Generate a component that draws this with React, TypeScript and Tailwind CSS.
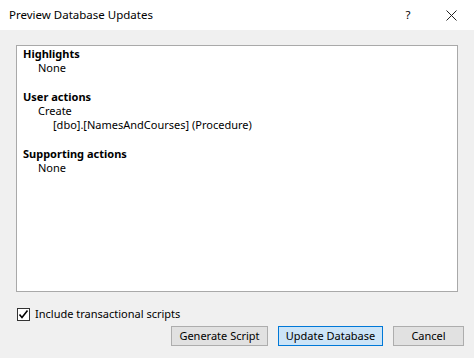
import React from 'react';

const font = { fontFamily: '"Segoe UI", "Noto Sans", "Liberation Sans", sans-serif' };

function Section({ title, children, first }: { title: string; children: React.ReactNode; first?: boolean }) {
    return (
        <div className={first ? '' : 'mt-[15px]'}>
            <div className="font-bold leading-[14px]">{title}</div>
            <div className="pl-[15px]">{children}</div>
        </div>
    );
}

function App() {
    return (
        <div className="w-[474px] h-[358px] flex flex-col bg-[#f0f0f0] text-[11px] text-black overflow-hidden" style={font}>
            {/* title bar */}
            <div className="h-[30px] bg-white flex items-center pl-[9px] shrink-0 text-[11.5px]">
                <span className="flex-1">Preview Database Updates</span>
                <span className="w-[12px] text-center mr-[32px]">?</span>
                <svg width="11" height="11" viewBox="0 0 11 11" className="mr-[17px]">
                    <path d="M0.5 0.5 L10.5 10.5 M10.5 0.5 L0.5 10.5" stroke="#222" strokeWidth="1" />
                </svg>
            </div>

            <div className="flex-1 flex flex-col px-[16px] pt-[15px]">
                <div className="h-[247px] bg-white border border-[#a9a9a9] pl-[6px] pt-[1px] leading-[14px]">
                    <Section title="Highlights" first>
                        <div>None</div>
                    </Section>
                    <Section title="User actions">
                        <div>Create</div>
                        <div className="pl-[15px]">[dbo].[NamesAndCourses] (Procedure)</div>
                    </Section>
                    <Section title="Supporting actions">
                        <div>None</div>
                    </Section>
                </div>

                <label className="flex items-center gap-[5px] mt-[15px] pl-[1px] h-[14px]">
                    <span className="w-[13px] h-[13px] border border-[#333] bg-white flex items-center justify-center">
                        <svg width="11" height="11" viewBox="0 0 11 11">
                            <path d="M1.5 5.5 L4 8.5 L9.5 1.5" stroke="#000" strokeWidth="1.6" fill="none" />
                        </svg>
                    </span>
                    <span>Include transactional scripts</span>
                </label>

                <div className="flex justify-end gap-[10px] mt-[5px] mr-[-6px]">
                    <button className="w-[97px] h-[20px] bg-[#e1e1e1] border border-[#adadad]">Generate Script</button>
                    <button className="w-[105px] h-[20px] bg-[#cce4f7] border border-[#0078d7]">Update Database</button>
                    <button className="w-[71px] h-[20px] bg-[#e1e1e1] border border-[#adadad]">Cancel</button>
                </div>
            </div>
        </div>
    );
}

export default App;
